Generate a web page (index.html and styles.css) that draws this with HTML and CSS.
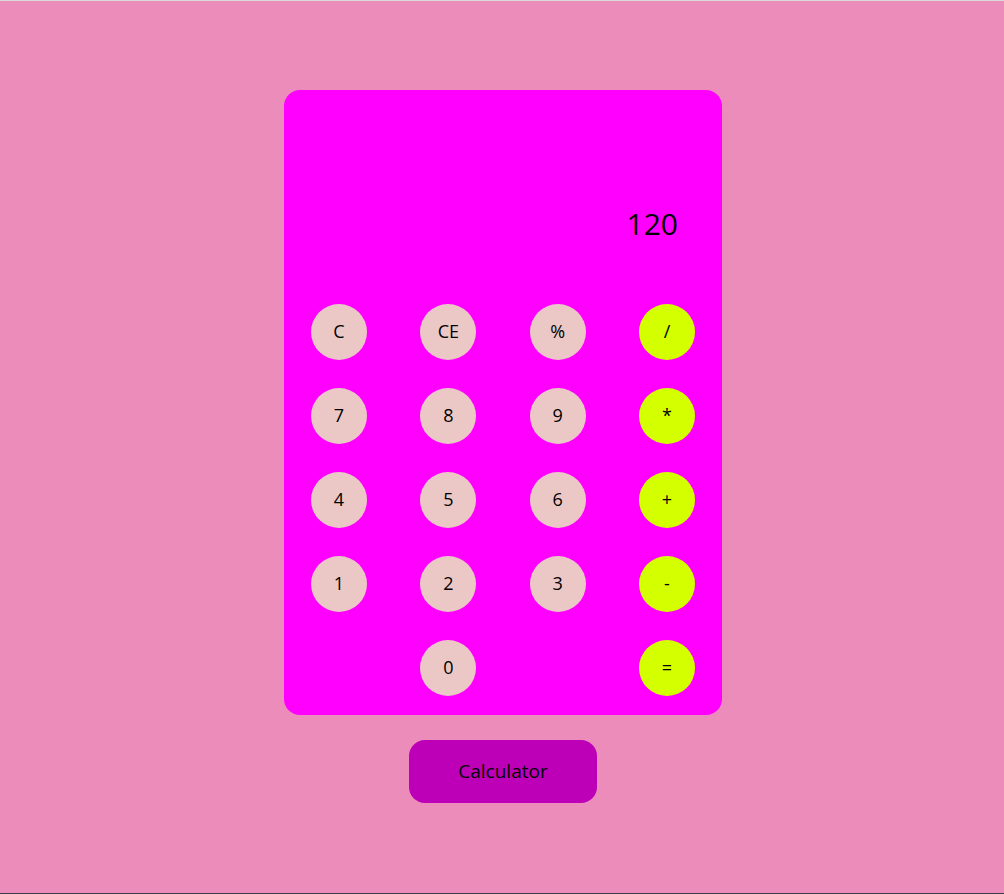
FILE: index.html
```html
<!DOCTYPE html>
<html>
<head>
<meta charset="utf-8">
<link rel="stylesheet" href="styles.css">
</head>
<body>
<div class="page">
  <div class="calc">
    <div class="display">120</div>
    <div class="keys">
      <button class="key">C</button>
      <button class="key">CE</button>
      <button class="key">%</button>
      <button class="key op">/</button>
      <button class="key">7</button>
      <button class="key">8</button>
      <button class="key">9</button>
      <button class="key op">*</button>
      <button class="key">4</button>
      <button class="key">5</button>
      <button class="key">6</button>
      <button class="key op">+</button>
      <button class="key">1</button>
      <button class="key">2</button>
      <button class="key">3</button>
      <button class="key op">-</button>
      <span class="blank"></span>
      <button class="key">0</button>
      <span class="blank"></span>
      <button class="key op">=</button>
    </div>
  </div>
  <button class="label">Calculator</button>
</div>
</body>
</html>
```
FILE: styles.css
```css
html, body {
  margin: 0;
  padding: 0;
}
body {
  background: #ec8cba;
  font-family: "Open Sans", "DejaVu Sans", sans-serif;
}
.page {
  box-sizing: border-box;
  height: 894px;
  border-top: 1px solid #d9d9d9;
  border-bottom: 1px solid #3c3c48;
  display: flex;
  flex-direction: column;
  align-items: center;
  padding-top: 89px;
}
.calc {
  box-sizing: border-box;
  width: 438px;
  height: 625px;
  margin-left: 2px;
  background: #ff00ff;
  border-radius: 16px;
  padding: 0 27px 19px;
  display: flex;
  flex-direction: column;
}
.display {
  height: 215px;
  box-sizing: border-box;
  text-align: right;
  padding-right: 17px;
  padding-top: 118px;
  font-size: 30px;
  line-height: 32px;
  color: #000;
}
.keys {
  display: grid;
  grid-template-columns: repeat(4, 56px);
  grid-auto-rows: 56px;
  justify-content: space-between;
  row-gap: 28px;
}
.key {
  width: 56px;
  height: 56px;
  border: none;
  border-radius: 50%;
  background: #ebc8c6;
  color: #000;
  font-family: inherit;
  font-size: 18px;
  padding: 0 0 2px;
  cursor: pointer;
}
.key.op {
  background: #d4ff00;
}
.label {
  margin-top: 25px;
  margin-left: 2px;
  width: 188px;
  height: 63px;
  border: none;
  border-radius: 16px;
  background: #bd00b8;
  color: #000;
  font-family: inherit;
  font-size: 19px;
  padding: 0 0 2px;
}
```
